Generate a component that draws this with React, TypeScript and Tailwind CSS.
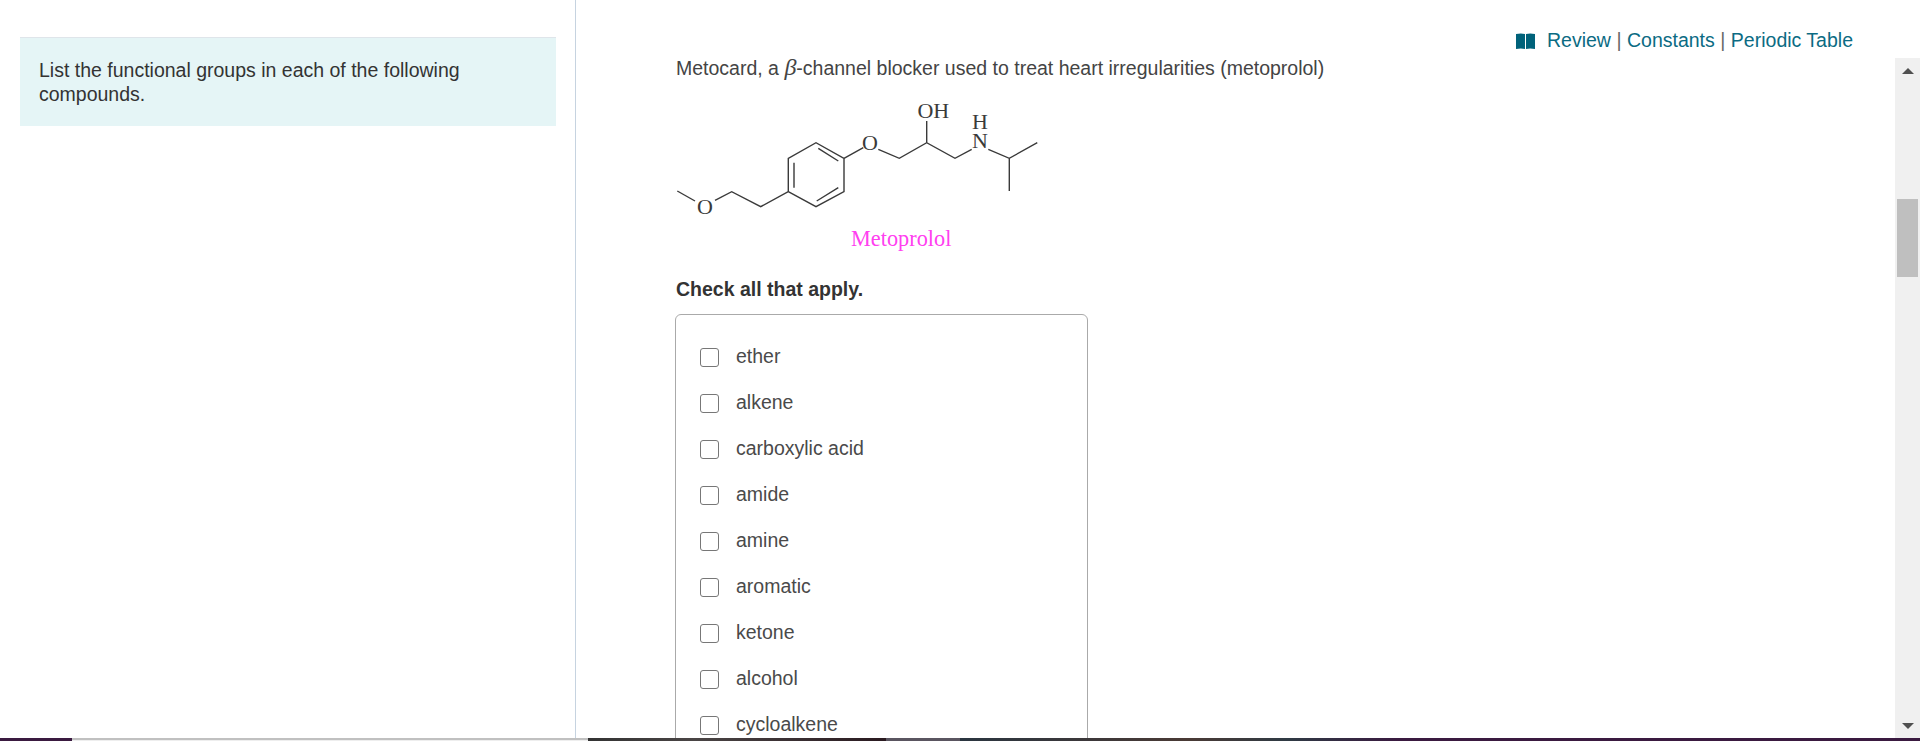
const options = [
  'ether',
  'alkene',
  'carboxylic acid',
  'amide',
  'amine',
  'aromatic',
  'ketone',
  'alcohol',
  'cycloalkene',
];

function Molecule() {
  return (
    <svg width="400" height="130" viewBox="0 0 400 130" className="block">
      <g fill="none" stroke="#3a3a3a" strokeWidth="1.4">
        <path d="M1.3 95 L19 105" />
        <path d="M39 104.3 L55.7 95.7 L84.7 110.7 L112.3 95.7 L112.3 62.3 L140 46.7 L168 62.3 L168 95.7 L140 110.7 L112.3 95.7" />
        <path d="M118 66.7 L118 91.7 M142.3 52.3 L162.3 65 M162.3 91.7 L140.7 105" />
        <path d="M168 62.3 L187.3 51.7 M202.3 53.3 L223.3 62.3 L250.7 46.7 L279 62.3 L295.7 53.3 M312.3 53.3 L333.3 62.3 L361.3 46.7 M333.3 62.3 L333.3 95 M250.7 46.7 L250.7 25" />
      </g>
      <g fill="#3a3a3a" fontFamily="'Liberation Serif', serif" fontSize="22" textAnchor="middle">
        <text x="29" y="117.5">O</text>
        <text x="194" y="53.5">O</text>
        <text x="304" y="52">N</text>
        <text x="304" y="33">H</text>
        <text x="257.3" y="21.5">OH</text>
      </g>
    </svg>
  );
}

export default function App() {
  return (
    <div className="h-[741px] flex flex-col overflow-hidden bg-white font-['Liberation_Sans',Arial,sans-serif] text-[#444]">
      <div className="flex-1 min-h-0 flex">
        <div className="w-[576px] shrink-0 border-r border-[#c6d3e0] pt-[37px] pl-[20px] pr-[19px]">
          <div className="border-t border-[#dfe5ea] bg-[#e5f5f6] h-[89px] pt-[21px] pl-[19px] pr-[20px] text-[19.5px] leading-[23.5px] text-[#333]">
            List the functional groups in each of the following compounds.
          </div>
        </div>
        <div className="flex-1 min-w-0 overflow-hidden">
          <div className="h-[55px] flex items-center justify-end pt-[26px] pr-[42px] text-[19.5px] text-[#0b6b83]">
            <svg width="19" height="16" viewBox="0 0 19 16" className="mr-[12px]">
              <path d="M0 1 Q5 0 9 1 V16 Q5 15 0 16 Z M10 1 Q14 0 19 1 V16 Q14 15 10 16 Z" fill="#00627a" />
            </svg>
            <span>Review</span>
            <span className="mx-[5.5px] text-[#666]">|</span>
            <span>Constants</span>
            <span className="mx-[5.5px] text-[#666]">|</span>
            <span>Periodic Table</span>
          </div>
          <div className="pl-[100px]">
            <p className="text-[19.5px] leading-[24px]">
              Metocard, a <i className="font-['Liberation_Serif',serif] text-[24px] leading-none">β</i>-channel blocker used to treat heart irregularities (metoprolol)
            </p>
            <div className="mt-[16px]">
              <Molecule />
            </div>
            <p className="ml-[175px] text-[22.3px] leading-[26px] text-[#ff40f0] font-['Liberation_Serif',serif]">Metoprolol</p>
            <p className="mt-[25px] text-[19.5px] leading-[24px] font-bold text-[#333]">Check all that apply.</p>
            <div className="mt-[13px] -ml-px w-[413px] border border-[#aaa] rounded-[6px] pt-[30px] pb-[40px] pl-[24px]">
              <ul className="flex flex-col gap-[22px]">
                {options.map((o) => (
                  <li key={o} className="flex items-center h-[24px]">
                    <span className="w-[19px] h-[19px] border border-[#777] rounded-[3px] mr-[17px]" />
                    <span className="text-[19.5px] text-[#4a4a4a]">{o}</span>
                  </li>
                ))}
              </ul>
            </div>
          </div>
        </div>
        <div className="w-[25px] shrink-0 pt-[58px] flex">
          <div className="flex-1 bg-[#f0f0f0] flex flex-col items-center">
            <div className="h-[141px] w-full pt-[10px] flex justify-center">
              <div className="w-0 h-0 border-l-[6px] border-r-[6px] border-b-[6px] border-l-transparent border-r-transparent border-b-[#505050]" />
            </div>
            <div className="w-[21px] h-[78px] bg-[#bfbfbf]" />
            <div className="mt-auto mb-[9px] w-0 h-0 border-l-[6px] border-r-[6px] border-t-[6px] border-l-transparent border-r-transparent border-t-[#505050]" />
          </div>
        </div>
      </div>
      <div className="h-[3px] shrink-0 flex">
        <div className="w-[72px] bg-[#3a1a40]" />
        <div className="w-[516px] bg-[#c0c0c0] border-b border-[#eee]" />
        <div className="flex-1 bg-[linear-gradient(90deg,#333_0%,#4a4545_8%,#2a1a20_22.4%,#5a5560_22.4%,#5a5560_27.9%,#2a3540_27.9%,#4a3a35_45%,#2f3a44_52.6%,#3a1a40_61%,#3a1a40_100%)]" />
      </div>
    </div>
  );
}
